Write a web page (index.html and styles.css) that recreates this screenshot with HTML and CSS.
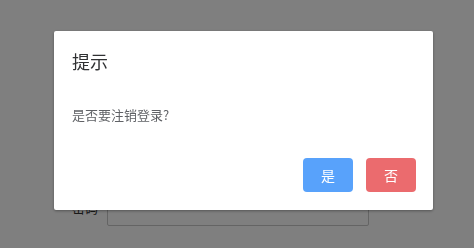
FILE: index.html
```html
<!DOCTYPE html>
<html lang="zh-CN">
<head>
<meta charset="utf-8">
<link rel="stylesheet" href="styles.css">
</head>
<body>
<div class="page">
  <div class="form-row">
    <label class="form-label">密码</label>
    <div class="form-input"></div>
  </div>
</div>
<div class="overlay">
  <div class="dialog">
    <div class="dialog-title">提示</div>
    <div class="dialog-body">是否要注销登录?</div>
    <div class="dialog-footer">
      <button class="btn btn-yes">是</button>
      <button class="btn btn-no">否</button>
    </div>
  </div>
</div>
</body>
</html>
```
FILE: styles.css
```css
html, body {
  margin: 0;
  padding: 0;
}
body {
  width: 474px;
  height: 248px;
  overflow: hidden;
  background: #ffffff;
  font-family: "Noto Sans CJK SC", "Noto Sans", sans-serif;
}
.page {
  padding: 186px 0 0 72px;
}
.form-row {
  display: flex;
  align-items: flex-end;
  gap: 9px;
}
.form-label {
  font-size: 13px;
  line-height: 18px;
  color: #333;
  padding-bottom: 9px;
}
.form-input {
  width: 262px;
  height: 40px;
  border: 1px solid #c8c8c8;
  box-sizing: border-box;
  border-radius: 2px;
}
.overlay {
  position: fixed;
  inset: 0;
  background: rgba(0, 0, 0, 0.5);
  padding: 31px 0 0 54px;
  box-sizing: border-box;
}
.dialog {
  width: 379px;
  box-sizing: border-box;
  background: #fff;
  padding: 18px 17px 18px 18px;
  box-shadow: 0 1px 3px rgba(0, 0, 0, 0.35);
  border-radius: 2px;
}
.dialog-title {
  font-size: 18px;
  line-height: 24px;
  color: #303133;
}
.dialog-body {
  margin-top: 32px;
  font-size: 13px;
  line-height: 20px;
  color: #606266;
}
.dialog-footer {
  margin-top: 33px;
  display: flex;
  justify-content: flex-end;
  gap: 13px;
}
.btn {
  width: 50px;
  height: 34px;
  border: none;
  border-radius: 4px;
  color: #fff;
  font-family: "Noto Sans CJK SC", "Noto Sans", sans-serif;
  font-size: 14px;
  display: flex;
  align-items: center;
  justify-content: center;
  padding: 0;
}
.btn-yes {
  background: #58a2fb;
}
.btn-no {
  background: #eb6b6e;
}
```
